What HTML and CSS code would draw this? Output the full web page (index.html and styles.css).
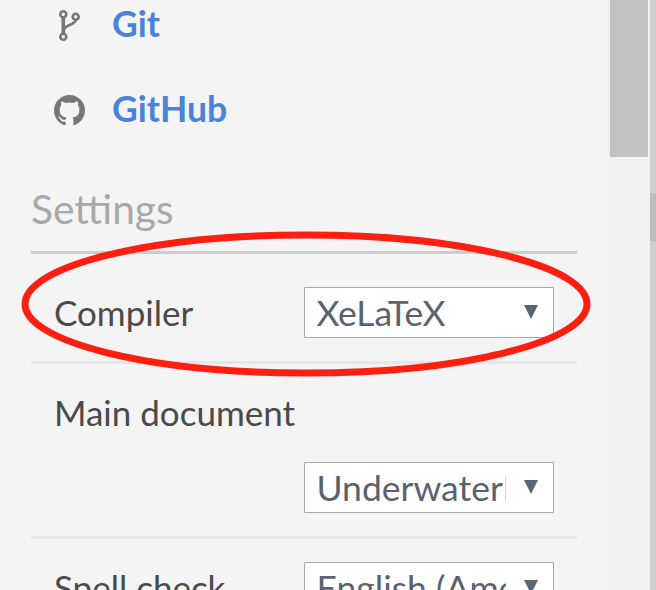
FILE: index.html
```html
<!DOCTYPE html>
<html lang="en">
<head>
<meta charset="utf-8">
<title>Settings</title>
<link rel="stylesheet" href="styles.css">
</head>
<body>
<div class="frame">
  <aside class="sidebar">
    <nav class="links">
      <a class="link link-git" href="#">
        <span class="icon">
          <svg width="24" height="36" viewBox="0 0 24 36" fill="none" stroke="#777" stroke-width="2.6">
            <circle cx="5.3" cy="7.3" r="3"/>
            <circle cx="17.7" cy="9.7" r="3"/>
            <circle cx="5.3" cy="29.7" r="3"/>
            <path d="M5.3 10.3V26.7" stroke-width="3.6"/>
            <path d="M17.7 12.7C17.7 18.5 5.3 17 5.3 25"/>
          </svg>
        </span>
        <span class="link-text">Git</span>
      </a>
      <a class="link link-github" href="#">
        <span class="icon">
          <svg width="31" height="31" viewBox="0 0 16 16" fill="#777">
            <path d="M8 0C3.58 0 0 3.58 0 8c0 3.54 2.29 6.53 5.47 7.59.4.07.55-.17.55-.38 0-.19-.01-.82-.01-1.49-2.01.37-2.53-.49-2.69-.94-.09-.23-.48-.94-.82-1.13-.28-.15-.68-.52-.01-.53.63-.01 1.08.58 1.23.82.72 1.21 1.87.87 2.33.66.07-.52.28-.87.51-1.07-1.78-.2-3.64-.89-3.64-3.95 0-.87.31-1.59.82-2.15-.08-.2-.36-1.02.08-2.12 0 0 .67-.21 2.2.82.64-.18 1.32-.27 2-.27.68 0 1.36.09 2 .27 1.53-1.04 2.2-.82 2.2-.82.44 1.1.16 1.92.08 2.12.51.56.82 1.27.82 2.15 0 3.07-1.87 3.75-3.65 3.95.29.25.54.73.54 1.48 0 1.07-.01 1.93-.01 2.2 0 .21.15.46.55.38A8.013 8.013 0 0016 8c0-4.42-3.58-8-8-8z"/>
          </svg>
        </span>
        <span class="link-text">GitHub</span>
      </a>
    </nav>
    <h2 class="heading">Settings</h2>
    <div class="row row-compiler">
      <span class="label">Compiler</span>
      <div class="select"><span class="value">XeLaTeX</span><i class="arrow"></i></div>
    </div>
    <div class="row row-main">
      <span class="label">Main document</span>
      <div class="select"><span class="value">UnderwaterImaging.tex</span><i class="arrow"></i></div>
    </div>
    <div class="row row-spell">
      <span class="label">Spell check</span>
      <div class="select"><span class="value">English (American)</span><i class="arrow"></i></div>
    </div>
  </aside>
  <div class="track"><div class="thumb"></div></div>
  <div class="edge"><div class="edge-thumb"></div></div>
  <svg class="circle" width="656" height="590" viewBox="0 0 656 590" fill="none">
    <ellipse cx="306" cy="304" rx="281" ry="69" stroke="#ff1f10" stroke-width="7"/>
  </svg>
</div>
</body>
</html>
```
FILE: styles.css
```css
* { box-sizing: border-box; }
html, body { margin: 0; padding: 0; }
body { font-family: Lato, "Open Sans", sans-serif; background: #f4f4f4; }
.frame { position: relative; display: flex; width: 656px; height: 590px; overflow: hidden; }
.sidebar { width: 608px; flex: none; padding: 0 31px; background: #f4f4f4; }
.links { display: flex; flex-direction: column; }
.link { display: flex; align-items: center; text-decoration: none; margin-left: 23px; }
.link-git { height: 50px; }
.link-github { height: 50px; margin-top: 35px; }
.icon { display: flex; justify-content: center; align-items: center; width: 31px; flex: none; }
.link-text { margin: 0 0 3px 27px; font-size: 35.5px; font-weight: 700; color: #4a83d8; line-height: 1; }
.heading { margin: 0; padding-top: 50px; height: 119px; font-size: 40.7px; line-height: 48px; font-weight: 400; color: #a8a8a8; border-bottom: 3px solid #cdcdcd; }
.row { display: grid; grid-template-columns: 1fr 250px; padding: 0 23px; border-bottom: 3px solid #e6e6e6; align-items: center; }
.row-compiler { height: 110px; padding-top: 10px; }
.row-compiler .label { margin-top: -2px; }
.row-main { height: 175px; align-content: start; padding-top: 24px; row-gap: 24px; grid-template-columns: 1fr; justify-items: end; }
.row-main .label { justify-self: start; margin-top: -1px; margin-bottom: 1px; }
.row-spell { padding-top: 23px; align-items: start; }
.label { font-size: 35px; line-height: 50px; color: #4a4a4a; white-space: nowrap; }
.select { position: relative; display: flex; align-items: center; width: 250px; height: 51px; padding-left: 11.5px; border: 1.5px solid #a8a8a8; border-radius: 1px; background: #fff; }
.value { display: block; width: 189px; overflow: hidden; white-space: nowrap; font-size: 35.5px; line-height: 48px; color: #5a6270; }
.arrow { position: absolute; right: 15px; top: 17px; width: 0; height: 0; border-left: 7.5px solid transparent; border-right: 7.5px solid transparent; border-top: 14px solid #5b6675; }
.track { width: 42px; flex: none; height: 100%; padding: 0 2px; background: #f1f1f1; }
.thumb { height: 157px; background: #c1c1c1; }
.edge { position: relative; width: 6px; flex: none; height: 100%; background: #cfcfcf; }
.edge-thumb { position: absolute; left: 0; right: 0; top: 193px; height: 48px; background: #bdbdbd; }
.circle { position: absolute; left: 0; top: 0; pointer-events: none; }
```
